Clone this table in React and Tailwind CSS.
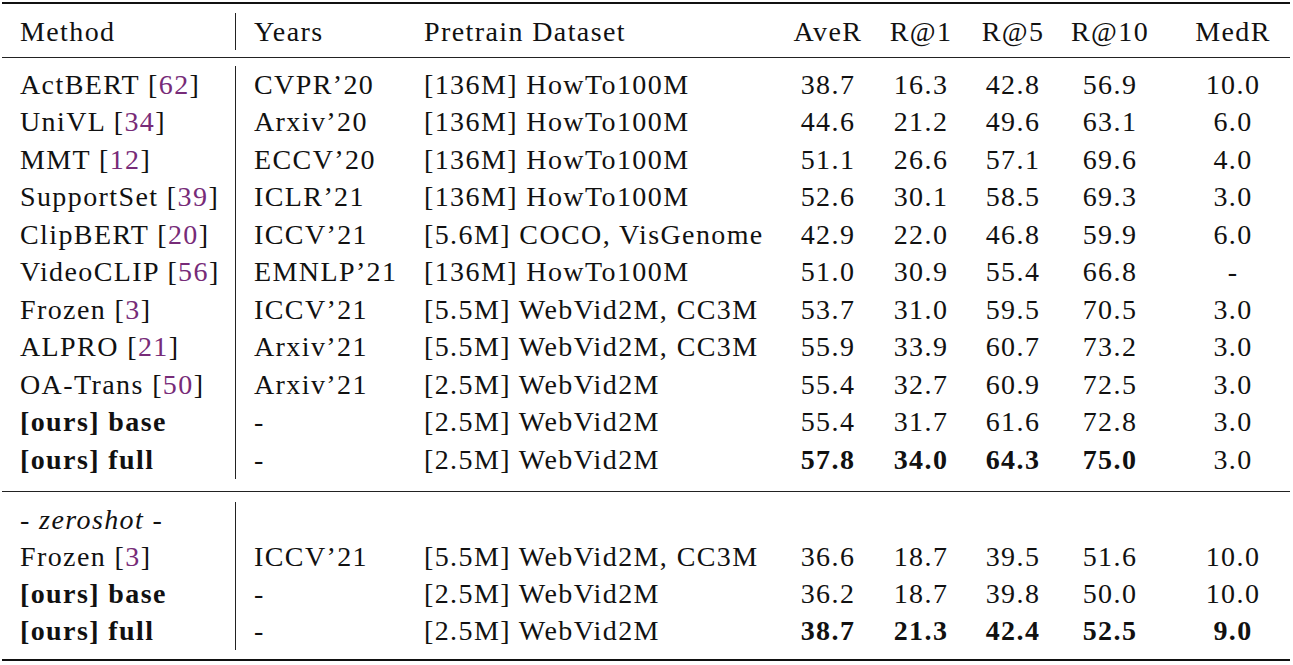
const cols = 'grid grid-cols-[234px_170px_374px_96px_90px_94px_100px_130px]';

const groupA = [
  { m: 'ActBERT', c: '62', y: 'CVPR’20', d: '[136M] HowTo100M', v: ['38.7', '16.3', '42.8', '56.9', '10.0'] },
  { m: 'UniVL', c: '34', y: 'Arxiv’20', d: '[136M] HowTo100M', v: ['44.6', '21.2', '49.6', '63.1', '6.0'] },
  { m: 'MMT', c: '12', y: 'ECCV’20', d: '[136M] HowTo100M', v: ['51.1', '26.6', '57.1', '69.6', '4.0'] },
  { m: 'SupportSet', c: '39', y: 'ICLR’21', d: '[136M] HowTo100M', v: ['52.6', '30.1', '58.5', '69.3', '3.0'] },
  { m: 'ClipBERT', c: '20', y: 'ICCV’21', d: '[5.6M] COCO, VisGenome', v: ['42.9', '22.0', '46.8', '59.9', '6.0'] },
  { m: 'VideoCLIP', c: '56', y: 'EMNLP’21', d: '[136M] HowTo100M', v: ['51.0', '30.9', '55.4', '66.8', '-'] },
  { m: 'Frozen', c: '3', y: 'ICCV’21', d: '[5.5M] WebVid2M, CC3M', v: ['53.7', '31.0', '59.5', '70.5', '3.0'] },
  { m: 'ALPRO', c: '21', y: 'Arxiv’21', d: '[5.5M] WebVid2M, CC3M', v: ['55.9', '33.9', '60.7', '73.2', '3.0'] },
  { m: 'OA-Trans', c: '50', y: 'Arxiv’21', d: '[2.5M] WebVid2M', v: ['55.4', '32.7', '60.9', '72.5', '3.0'] },
  { m: '[ours] base', ours: true, y: '-', d: '[2.5M] WebVid2M', v: ['55.4', '31.7', '61.6', '72.8', '3.0'] },
  { m: '[ours] full', ours: true, y: '-', d: '[2.5M] WebVid2M', v: ['57.8', '34.0', '64.3', '75.0', '3.0'], b: [0, 1, 2, 3] },
];

const groupB = [
  { zero: true },
  { m: 'Frozen', c: '3', y: 'ICCV’21', d: '[5.5M] WebVid2M, CC3M', v: ['36.6', '18.7', '39.5', '51.6', '10.0'] },
  { m: '[ours] base', ours: true, y: '-', d: '[2.5M] WebVid2M', v: ['36.2', '18.7', '39.8', '50.0', '10.0'] },
  { m: '[ours] full', ours: true, y: '-', d: '[2.5M] WebVid2M', v: ['38.7', '21.3', '42.4', '52.5', '9.0'], b: [0, 1, 2, 3, 4] },
];

const Row = ({ r, h }) => {
  const bold = r.b || [];
  return (
    <div className={cols}>
      <div className={`${h} flex items-center pl-[18px] border-r border-[#222]`}>
        {r.zero ? (
          <span className="italic">- zeroshot -</span>
        ) : r.ours ? (
          <span className="font-bold">{r.m}</span>
        ) : (
          <span>
            {r.m} [<span className="text-[#772b78]">{r.c}</span>]
          </span>
        )}
      </div>
      <div className={`${h} flex items-center pl-[18px]`}>{r.y}</div>
      <div className={`${h} flex items-center pl-[18px]`}>{r.d}</div>
      {(r.v || []).map((x, i) => (
        <div
          key={i}
          className={`${h} flex items-center justify-center ${i === 4 ? 'pl-[16px]' : ''} ${bold.includes(i) ? 'font-bold' : ''}`}
        >
          {x}
        </div>
      ))}
    </div>
  );
};

export default function App() {
  return (
    <div className="bg-white w-[1293px] h-[665px] pt-[2px] text-[28px] tracking-[0.05em] text-[#111] font-['Liberation_Serif',serif]">
      <div className="ml-[2px] w-[1288px] border-t-2 border-b-2 border-[#111]">
        <div className="pt-[9px] pb-[7px]">
          <div className={cols}>
            <div className="h-[37px] flex items-center pl-[18px] border-r border-[#222]">Method</div>
            <div className="h-[37px] flex items-center pl-[18px]">Years</div>
            <div className="h-[37px] flex items-center pl-[18px]">Pretrain Dataset</div>
            <div className="h-[37px] flex items-center justify-center">AveR</div>
            <div className="h-[37px] flex items-center justify-center">R@1</div>
            <div className="h-[37px] flex items-center justify-center">R@5</div>
            <div className="h-[37px] flex items-center justify-center">R@10</div>
            <div className="h-[37px] flex items-center justify-center pl-[16px]">MedR</div>
          </div>
        </div>
        <div className="border-t border-[#222] pt-[8px] pb-[12px]">
          {groupA.map((r, i) => (
            <Row key={i} r={r} h="h-[37.5px]" />
          ))}
        </div>
        <div className="border-t border-[#222] pt-[10px] pb-[9px]">
          {groupB.map((r, i) => (
            <Row key={i} r={r} h="h-[37px]" />
          ))}
        </div>
      </div>
    </div>
  );
}
